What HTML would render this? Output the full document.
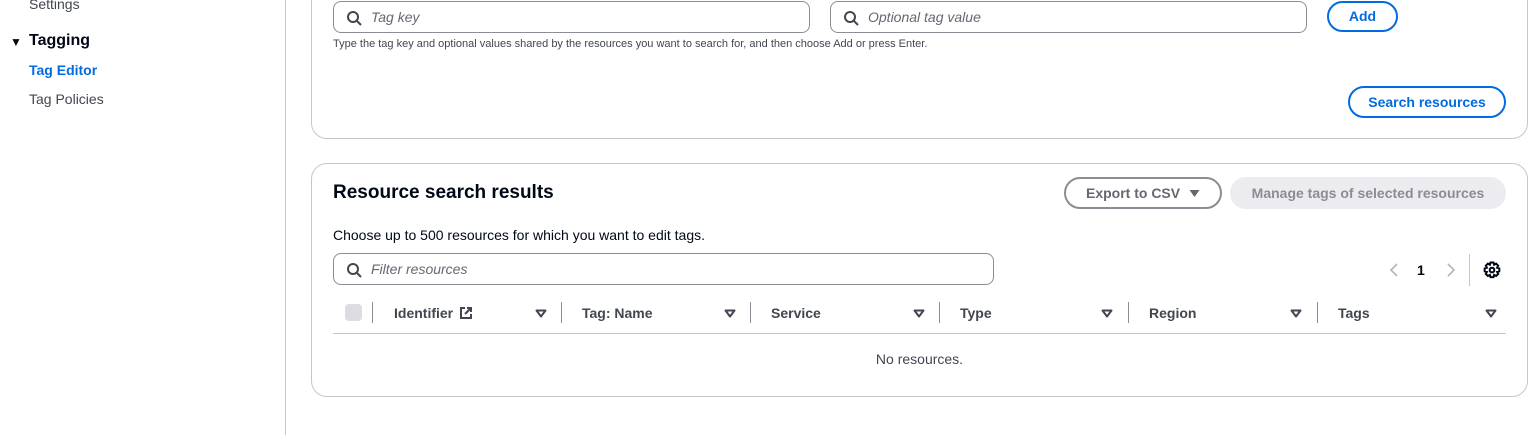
<!DOCTYPE html>
<html><head><meta charset="utf-8"><style>
*{box-sizing:border-box;margin:0;padding:0}
body{width:1536px;height:435px;background:#fff;font-family:"Liberation Sans",Arial,sans-serif;color:#000716;position:relative;overflow:hidden;font-size:14px}
.a{position:absolute;white-space:nowrap}
.card{position:absolute;border:1px solid #c6c6cd;border-radius:16px;background:#fff}
.inp{position:absolute;border:1px solid #8c8c94;border-radius:8px;height:32px;color:#656871;font-style:italic;font-size:14px;line-height:30px;padding-left:37px}
.inp svg{position:absolute;left:12px;top:8px}
.btn{position:absolute;border:2px solid #006ce0;border-radius:20px;color:#006ce0;font-weight:bold;text-align:center;font-size:14px}
.th{position:absolute;top:305px;font-weight:bold;font-size:14px;color:#424650}
.sep{position:absolute;top:302px;width:1px;height:21px;background:#8c8c94}
.tri{position:absolute;top:309px}
</style></head><body>
<div class="a" style="left:29px;top:-4px;color:#424650">Settings</div>
<div class="a" style="left:10px;top:35px;font-size:12px">▼</div>
<div class="a" style="left:29px;top:32px;font-weight:bold;font-size:16px">Tagging</div>
<div class="a" style="left:29px;top:62px;font-weight:bold;color:#006ce0">Tag Editor</div>
<div class="a" style="left:29px;top:91px;color:#424650">Tag Policies</div>
<div class="a" style="left:285px;top:0;width:1px;height:435px;background:#c6c6cd"></div>

<div class="card" style="left:311px;top:-30px;width:1217px;height:169px"></div>
<div class="inp" style="left:333px;top:1px;width:477px"><svg width="16" height="16" viewBox="0 0 16 16" fill="none" stroke="#424650" stroke-width="2"><circle cx="7" cy="7" r="5"/><path d="M11 11l4 4"/></svg>Tag key</div>
<div class="inp" style="left:830px;top:1px;width:477px"><svg width="16" height="16" viewBox="0 0 16 16" fill="none" stroke="#424650" stroke-width="2"><circle cx="7" cy="7" r="5"/><path d="M11 11l4 4"/></svg>Optional tag value</div>
<div class="btn" style="left:1327px;top:1px;width:71px;height:31px;line-height:27px">Add</div>
<div class="a" style="left:333px;top:38px;font-size:11px;color:#424650">Type the tag key and optional values shared by the resources you want to search for, and then choose Add or press Enter.</div>
<div class="btn" style="left:1348px;top:86px;width:158px;height:32px;line-height:28px">Search resources</div>

<div class="card" style="left:311px;top:163px;width:1217px;height:234px"></div>
<div class="a" style="left:333px;top:182px;font-weight:bold;font-size:19px">Resource search results</div>
<div class="a" style="left:1064px;top:177px;width:158px;height:32px;border:2px solid #8c8c94;border-radius:20px;color:#656871;font-weight:bold;line-height:28px;text-align:center">Export to CSV <svg width="11" height="9" viewBox="0 0 11 9" style="margin-left:5px;vertical-align:0"><path d="M0.5 1h10L5.5 8z" fill="#656871"/></svg></div>
<div class="a" style="left:1230px;top:177px;width:276px;height:32px;background:#ebebf0;border-radius:20px;color:#8c8c94;font-weight:bold;line-height:32px;text-align:center">Manage tags of selected resources</div>
<div class="a" style="left:333px;top:227px;color:#000716">Choose up to 500 resources for which you want to edit tags.</div>
<div class="inp" style="left:333px;top:253px;width:661px"><svg width="16" height="16" viewBox="0 0 16 16" fill="none" stroke="#424650" stroke-width="2"><circle cx="7" cy="7" r="5"/><path d="M11 11l4 4"/></svg>Filter resources</div>
<svg class="a" style="left:1389px;top:263px" width="10" height="14" viewBox="0 0 10 14" fill="none" stroke="#b4b4bb" stroke-width="1.6"><path d="M8 1L2 7l6 6"/></svg>
<div class="a" style="left:1417px;top:262px;font-weight:bold">1</div>
<svg class="a" style="left:1446px;top:263px" width="10" height="14" viewBox="0 0 10 14" fill="none" stroke="#b4b4bb" stroke-width="1.6"><path d="M2 1l6 6-6 6"/></svg>
<div class="a" style="left:1469px;top:254px;width:1px;height:32px;background:#c6c6cd"></div>
<svg class="a" style="left:1483px;top:261px" width="18" height="18" viewBox="0 0 18 18" fill="none" stroke="#000716" stroke-width="2"><path d="M7.5 1.5h3l.6 2.2 2-1.1 2.1 2.1-1.1 2 2.2.6v3l-2.2.6 1.1 2-2.1 2.1-2-1.1-.6 2.2h-3l-.6-2.2-2 1.1-2.1-2.1 1.1-2-2.2-.6v-3l2.2-.6-1.1-2 2.1-2.1 2 1.1z"/><circle cx="9" cy="9" r="2.3"/></svg>

<div class="a" style="left:345px;top:304px;width:17px;height:17px;background:#dcdce2;border-radius:4px"></div>
<div class="sep" style="left:372px"></div>
<div class="th" style="left:394px">Identifier <svg width="14" height="14" viewBox="0 0 14 14" fill="none" stroke="#424650" stroke-width="2" style="vertical-align:-2px;margin-left:2px"><path d="M6 2H2v10h10V8M8 2h4v4M12 2L6 8"/></svg></div>
<div class="sep" style="left:561px"></div>
<div class="th" style="left:582px">Tag: Name</div>
<div class="sep" style="left:750px"></div>
<div class="th" style="left:771px">Service</div>
<div class="sep" style="left:939px"></div>
<div class="th" style="left:960px">Type</div>
<div class="sep" style="left:1128px"></div>
<div class="th" style="left:1149px">Region</div>
<div class="sep" style="left:1317px"></div>
<div class="th" style="left:1338px">Tags</div>
<svg class="tri" style="left:535px" width="12" height="9" viewBox="0 0 12 9"><path d="M1.5 1.5h9L6 7.5z" fill="none" stroke="#424650" stroke-width="2" stroke-linejoin="round"/></svg>
<svg class="tri" style="left:724px" width="12" height="9" viewBox="0 0 12 9"><path d="M1.5 1.5h9L6 7.5z" fill="none" stroke="#424650" stroke-width="2" stroke-linejoin="round"/></svg>
<svg class="tri" style="left:913px" width="12" height="9" viewBox="0 0 12 9"><path d="M1.5 1.5h9L6 7.5z" fill="none" stroke="#424650" stroke-width="2" stroke-linejoin="round"/></svg>
<svg class="tri" style="left:1101px" width="12" height="9" viewBox="0 0 12 9"><path d="M1.5 1.5h9L6 7.5z" fill="none" stroke="#424650" stroke-width="2" stroke-linejoin="round"/></svg>
<svg class="tri" style="left:1290px" width="12" height="9" viewBox="0 0 12 9"><path d="M1.5 1.5h9L6 7.5z" fill="none" stroke="#424650" stroke-width="2" stroke-linejoin="round"/></svg>
<svg class="tri" style="left:1485px" width="12" height="9" viewBox="0 0 12 9"><path d="M1.5 1.5h9L6 7.5z" fill="none" stroke="#424650" stroke-width="2" stroke-linejoin="round"/></svg>
<div class="a" style="left:333px;top:333px;width:1173px;height:1px;background:#c6c6cd"></div>
<div class="a" style="left:333px;top:351px;width:1173px;text-align:center;color:#424650">No resources.</div>
</body></html>
